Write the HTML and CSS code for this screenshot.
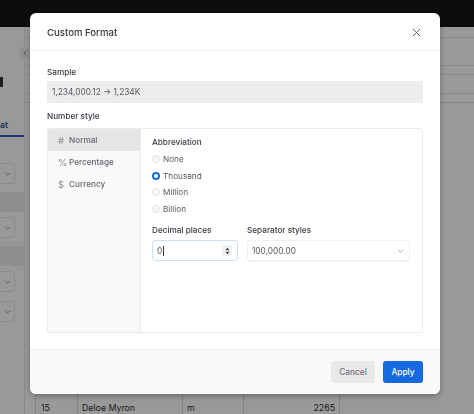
FILE: index.html
```html
<!DOCTYPE html>
<html>
<head>
  <link rel="stylesheet" href="styles.css">
</head>
<body>
  <div class="page">
    <div class="topbar"></div>
    <div class="workspace">
      <div class="side-panel">
        <div class="side-title"></div>
        <div class="side-tab">at</div>
        <div class="side-select first"><svg class="chevron" viewBox="0 0 8 5"><path d="M1 1l3 3 3-3"/></svg></div>
        <div class="side-band"></div>
        <div class="side-select"><svg class="chevron" viewBox="0 0 8 5"><path d="M1 1l3 3 3-3"/></svg></div>
        <div class="side-band"></div>
        <div class="side-select tight"><svg class="chevron" viewBox="0 0 8 5"><path d="M1 1l3 3 3-3"/></svg></div>
        <div class="side-select close"><svg class="chevron" viewBox="0 0 8 5"><path d="M1 1l3 3 3-3"/></svg></div>
      </div>
      <div class="content">
        <div class="right-rows">
          <div class="right-row one"></div>
          <div class="right-row two"></div>
          <div class="right-row three"></div>
        </div>
        <div class="table-row">
          <div class="cell cell-id">15</div>
          <div class="cell cell-name">Deloe Myron</div>
          <div class="cell cell-sex">m</div>
          <div class="cell cell-num">2265</div>
        </div>
      </div>
    </div>
    <button class="collapse-btn"><svg viewBox="0 0 6 8"><path d="M4.5 1L1.5 4l3 3"/></svg></button>
  </div>

  <div class="overlay"></div>

  <div class="modal">
    <div class="modal-header">
      <h1 class="modal-title">Custom Format</h1>
      <svg class="close-icon" viewBox="0 0 10 10"><path d="M1 1l8 8M9 1l-8 8"/></svg>
    </div>

    <div class="modal-body">
      <div class="field-label">Sample</div>
      <div class="sample">1,234,000.12 → 1,234K</div>

      <div class="field-label style-label">Number style</div>
      <div class="style-box">
        <div class="style-menu">
          <div class="style-item active"><span class="style-icon">#</span>Normal</div>
          <div class="style-item"><span class="style-icon">%</span>Percentage</div>
          <div class="style-item"><span class="style-icon">$</span>Currency</div>
        </div>
        <div class="style-panel">
          <div class="field-label">Abbreviation</div>
          <div class="radio-list">
            <div class="radio-row"><span class="radio"></span>None</div>
            <div class="radio-row"><span class="radio checked"></span>Thousand</div>
            <div class="radio-row"><span class="radio"></span>Million</div>
            <div class="radio-row"><span class="radio"></span>Billion</div>
          </div>
          <div class="field-grid">
            <div>
              <div class="field-label">Decimal places</div>
              <div class="number-input">
                <span class="number-value">0</span><span class="caret"></span>
                <span class="spinner"><svg viewBox="0 0 6 10"><path d="M3 0.5L5.5 4h-5zM3 9.5L0.5 6h5z"/></svg></span>
              </div>
            </div>
            <div>
              <div class="field-label">Separator styles</div>
              <div class="select">100,000.00<svg class="chevron" viewBox="0 0 8 5"><path d="M1 1l3 3 3-3"/></svg></div>
            </div>
          </div>
        </div>
      </div>
    </div>

    <div class="modal-footer">
      <button class="button cancel-button">Cancel</button>
      <button class="button apply-button">Apply</button>
    </div>
  </div>
</body>
</html>
```

FILE: styles.css
```css
:root {
  --text-primary: #363a43;
  --text-secondary: #63676f;
  --line: #ececec;
  --blue: #1769e0;
}

* {
  box-sizing: border-box;
}

html, body {
  height: 100%;
}

body {
  margin: 0;
  overflow: hidden;
  font-family: Inter, "Liberation Sans", sans-serif;
  font-size: 8.2px;
  color: var(--text-primary);
  background: white;
}

/* page behind the dialog */
.page {
  height: 100%;
  display: flex;
  flex-direction: column;
}

.topbar {
  height: 27px;
  background: #161616;
}

.workspace {
  flex: 1;
  display: flex;
}

.side-panel {
  width: 25px;
  flex: none;
  border-right: 1px solid #e8e8e8;
  overflow: hidden;
}

.side-title {
  width: 3px;
  height: 10px;
  margin-top: 50px;
  background: #333;
}

.side-tab {
  margin-top: 32px;
  height: 18px;
  font-size: 8.5px;
  font-weight: 600;
  line-height: 13px;
  color: #2a4f8f;
  border-bottom: 2px solid #2a62c4;
}

.side-select {
  width: 17px;
  height: 21px;
  margin-left: -2px;
  border: 1px solid #e8e8e8;
  border-radius: 3px;
  display: flex;
  align-items: center;
  justify-content: center;
  padding-left: 2px;
}

.side-select.first {
  margin-top: 26px;
}

.side-select.tight {
  margin-top: 5px;
}

.side-select.close {
  margin-top: 9px;
}

.side-band {
  height: 20px;
  margin-top: 8px;
  margin-bottom: 5px;
  background: #eeeeee;
}

.content {
  flex: 1;
  display: flex;
  flex-direction: column;
  justify-content: space-between;
}

.right-rows {
  display: flex;
  flex-direction: column;
}

.right-row {
  height: 10px;
  border-top: 1px solid #e6e6e6;
}

.right-row.one {
  margin-top: 10px;
}

.right-row.two {
  margin-top: 18px;
  border-bottom: 1px solid #e6e6e6;
}

.right-row.three {
  margin-top: 18px;
  border-bottom: 1px solid #e0e0e0;
}

.table-row {
  height: 20px;
  margin-left: 10px;
  display: flex;
  font-size: 8.8px;
  line-height: 28px;
  color: #2e2e2e;
}

.cell {
  padding: 0 4px;
  border-left: 1px solid #dcdcdc;
}

.cell-id {
  width: 42px;
  padding-left: 5px;
}

.cell-name {
  width: 105px;
}

.cell-sex {
  width: 61px;
}

.cell-num {
  width: 97px;
  text-align: right;
  border-right: 1px solid #dcdcdc;
}

.collapse-btn {
  position: absolute;
  left: 19px;
  top: 47px;
  width: 12px;
  height: 12px;
  padding: 0;
  border: none;
  border-radius: 50%;
  background: #eee;
  display: flex;
  align-items: center;
  justify-content: center;
}

.collapse-btn svg {
  width: 4px;
  height: 6px;
  fill: none;
  stroke: #555;
  stroke-width: 1;
}

.overlay {
  position: fixed;
  inset: 0;
  background: rgba(0, 0, 0, 0.4);
}

/* dialog */
.modal {
  position: fixed;
  left: 30px;
  top: 13px;
  width: 410px;
  height: 381px;
  display: flex;
  flex-direction: column;
  background: white;
  border-radius: 6px;
  overflow: hidden;
  box-shadow: 0 2px 6px rgba(0,0,0,0.3);
}

.modal-header {
  height: 38px;
  flex: none;
  padding: 1px 19px 0 17px;
  display: flex;
  align-items: center;
  justify-content: space-between;
  border-bottom: 1px solid #f0f0f0;
}

.modal-title {
  margin: 0;
  font-size: 9.6px;
  font-weight: 500;
  color: #33363d;
}

.close-icon {
  width: 9px;
  height: 9px;
  fill: none;
  stroke: #555a62;
  stroke-width: 1;
}

.modal-body {
  flex: 1;
  padding: 15px 17px 16px;
  display: flex;
  flex-direction: column;
}

.field-label {
  font-size: 8.2px;
  font-weight: 500;
  line-height: 13px;
  color: var(--text-primary);
}

.sample {
  height: 22px;
  margin-top: 2px;
  padding: 0 5px;
  line-height: 22px;
  border-radius: 2px;
  background: #ececec;
  color: #55585f;
  font-size: 8.3px;
}

.style-label {
  margin-top: 7px;
}

.style-box {
  flex: 1;
  margin-top: 5px;
  display: flex;
  border: 1px solid var(--line);
  border-radius: 2px;
}

.style-menu {
  width: 93px;
  flex: none;
  background: #f9f9f9;
  border-right: 1px solid var(--line);
}

.style-item {
  height: 22px;
  padding-left: 10px;
  display: flex;
  align-items: center;
  font-size: 8.2px;
  font-weight: 500;
  color: var(--text-secondary);
}

.style-item.active {
  background: #e6e6e6;
}

.style-icon {
  width: 11px;
  font-size: 9.5px;
  font-weight: 400;
  color: #888c93;
}

.style-panel {
  flex: 1;
  padding: 7px 12px 0 11px;
}

.radio-list {
  margin-top: 2px;
}

.radio-row {
  height: 16.5px;
  display: flex;
  align-items: center;
  gap: 3px;
  font-size: 8.2px;
  color: #55585f;
}

.radio {
  width: 8px;
  height: 8px;
  border: 1px solid #e2e2e2;
  border-radius: 50%;
  background: #f8f8f8;
}

.radio.checked {
  border: 2.5px solid var(--blue);
  background: white;
}

.field-grid {
  margin-top: 7px;
  display: grid;
  grid-template-columns: 86px 1fr;
  gap: 9px;
}

.number-input,
.select {
  height: 21px;
  margin-top: 3px;
  padding: 0 4px;
  display: flex;
  align-items: center;
  border-radius: 3px;
  font-size: 8.3px;
  color: #55585f;
}

.number-input {
  border: 1px solid #cfdff5;
}

.caret {
  width: 1px;
  height: 10px;
  margin-left: 1px;
  background: #333;
}

.spinner {
  margin-left: auto;
  margin-right: 1px;
  width: 10px;
  height: 11px;
  display: flex;
  align-items: center;
  justify-content: center;
  background: #f1f1f1;
}

.spinner svg {
  width: 5px;
  height: 8px;
  fill: #4a4d55;
}

.select {
  justify-content: space-between;
  border: 1px solid #f0f0f0;
  box-shadow: 0 1px 1px rgba(0,0,0,0.04);
}

.chevron {
  width: 7px;
  height: 4px;
  fill: none;
  stroke: #8b8b8b;
  stroke-width: 1;
}

.select .chevron {
  margin-right: 1px;
}

.modal-footer {
  height: 45px;
  flex: none;
  padding: 0 17px;
  display: flex;
  align-items: center;
  justify-content: flex-end;
  gap: 8px;
  background: #fafafa;
  border-top: 1px solid #efefef;
}

.button {
  height: 22px;
  border: none;
  border-radius: 3px;
  font-family: inherit;
  font-size: 8.3px;
  font-weight: 500;
}

.cancel-button {
  width: 44px;
  background: #e9e9e9;
  color: #6d717a;
}

.apply-button {
  width: 40px;
  background: var(--blue);
  color: white;
}
```
